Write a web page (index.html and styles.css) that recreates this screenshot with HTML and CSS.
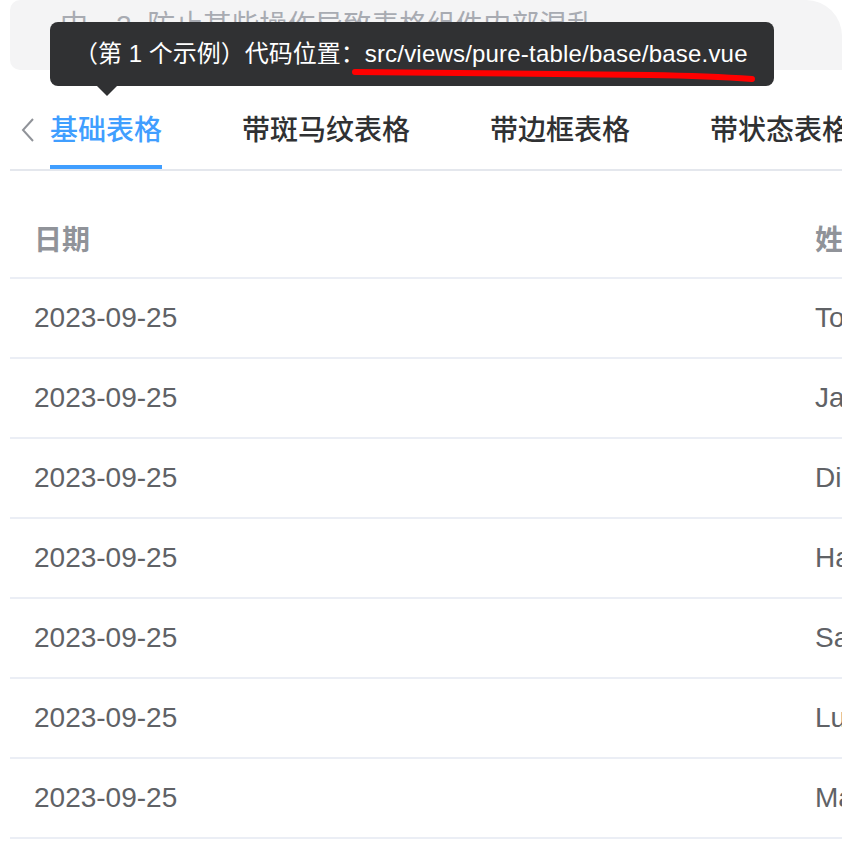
FILE: index.html
```html
<!DOCTYPE html>
<html lang="zh-CN">
<head>
  <meta charset="UTF-8" />
  <meta name="viewport" content="width=device-width, initial-scale=1.0"/>
  <title>基础表格</title>
  <link rel="stylesheet" href="styles.css">
</head>
<body>

  <div class="notice">
    <p>中，2. 防止某些操作导致表格组件内部混乱</p>
  </div>

  <div class="tooltip">
    （第 1 个示例）代码位置：<span class="path">src/views/pure-table/base/base.vue</span>
    <span class="arrow"></span>
  </div>

  <svg class="scribble" width="420" height="24" viewBox="0 0 420 24">
    <path d="M5 8 Q 160 9 300 11 Q 360 12 402 15" fill="none" stroke="#ff0000" stroke-width="6" stroke-linecap="round"/>
  </svg>

  <div class="tabs">
    <div class="tabs-prev">
      <svg width="16" height="26" viewBox="0 0 16 26">
        <path d="M13 2 L3 13 L13 24" fill="none" stroke="#909399" stroke-width="2"/>
      </svg>
    </div>
    <div class="tabs-nav">
      <div class="tab active">基础表格</div>
      <div class="tab">带斑马纹表格</div>
      <div class="tab">带边框表格</div>
      <div class="tab">带状态表格</div>
    </div>
  </div>

  <table class="data-table">
    <thead>
      <tr><th class="col-date">日期</th><th>姓名</th></tr>
    </thead>
    <tbody>
      <tr><td>2023-09-25</td><td>Tom</td></tr>
      <tr><td>2023-09-25</td><td>Jack</td></tr>
      <tr><td>2023-09-25</td><td>Dick</td></tr>
      <tr><td>2023-09-25</td><td>Harry</td></tr>
      <tr><td>2023-09-25</td><td>Sam</td></tr>
      <tr><td>2023-09-25</td><td>Lucy</td></tr>
      <tr><td>2023-09-25</td><td>Mary</td></tr>
    </tbody>
  </table>

</body>
</html>
```

FILE: styles.css
```css
body {
  margin: 0;
  padding: 0 0 0 10px;
  font-family: 'Liberation Sans', 'Noto Sans CJK SC', sans-serif;
  background: #fff;
  color: #303133;
  overflow: hidden;
  height: 868px;
  position: relative;
}

.notice {
  height: 70px;
  background: #f4f4f5;
  border-radius: 10px 36px 0 10px;
  box-sizing: border-box;
  padding: 10px 0 0 50px;
}

.notice p {
  margin: 0;
  font-size: 28px;
  line-height: 32px;
  color: #a8abb2;
  white-space: nowrap;
}

.tooltip {
  position: absolute;
  left: 50px;
  top: 22px;
  height: 64px;
  padding: 0 26px 0 24px;
  background: #303133;
  border-radius: 8px;
  color: #fff;
  font-size: 24px;
  line-height: 64px;
  white-space: nowrap;
}

.tooltip .path {
  letter-spacing: 0.2px;
}

.tooltip .arrow {
  position: absolute;
  left: 47px;
  bottom: -10px;
  width: 0;
  height: 0;
  border-left: 10px solid transparent;
  border-right: 10px solid transparent;
  border-top: 10px solid #303133;
}

.scribble {
  position: absolute;
  left: 350px;
  top: 64px;
}

.tabs {
  display: flex;
  margin-top: 21px;
  height: 78px;
  border-bottom: 2px solid #e4e7ed;
  white-space: nowrap;
}

.tabs-prev {
  width: 40px;
  flex: none;
  display: flex;
  align-items: center;
  justify-content: center;
  padding-right: 4px;
  box-sizing: border-box;
}

.tabs-nav {
  display: flex;
}

.tab {
  padding: 0 40px;
  font-size: 28px;
  line-height: 80px;
  font-weight: 500;
  color: #303133;
  position: relative;
}

.tab:first-child {
  padding-left: 0;
}

.tab.active {
  color: #409eff;
}

.tab.active::after {
  content: '';
  position: absolute;
  left: 0;
  right: 40px;
  bottom: 0;
  height: 4px;
  background: #409eff;
}

.data-table {
  margin-top: 28px;
  border-collapse: collapse;
  table-layout: fixed;
  width: 1300px;
}

.data-table th,
.data-table td {
  height: 78px;
  padding: 0 24px;
  text-align: left;
  border-bottom: 2px solid #ebeef5;
  font-size: 28px;
  white-space: nowrap;
  overflow: hidden;
}

.data-table .col-date {
  width: 733px;
}

.data-table th {
  color: #909399;
  font-weight: bold;
}

.data-table td {
  color: #606266;
}
```
